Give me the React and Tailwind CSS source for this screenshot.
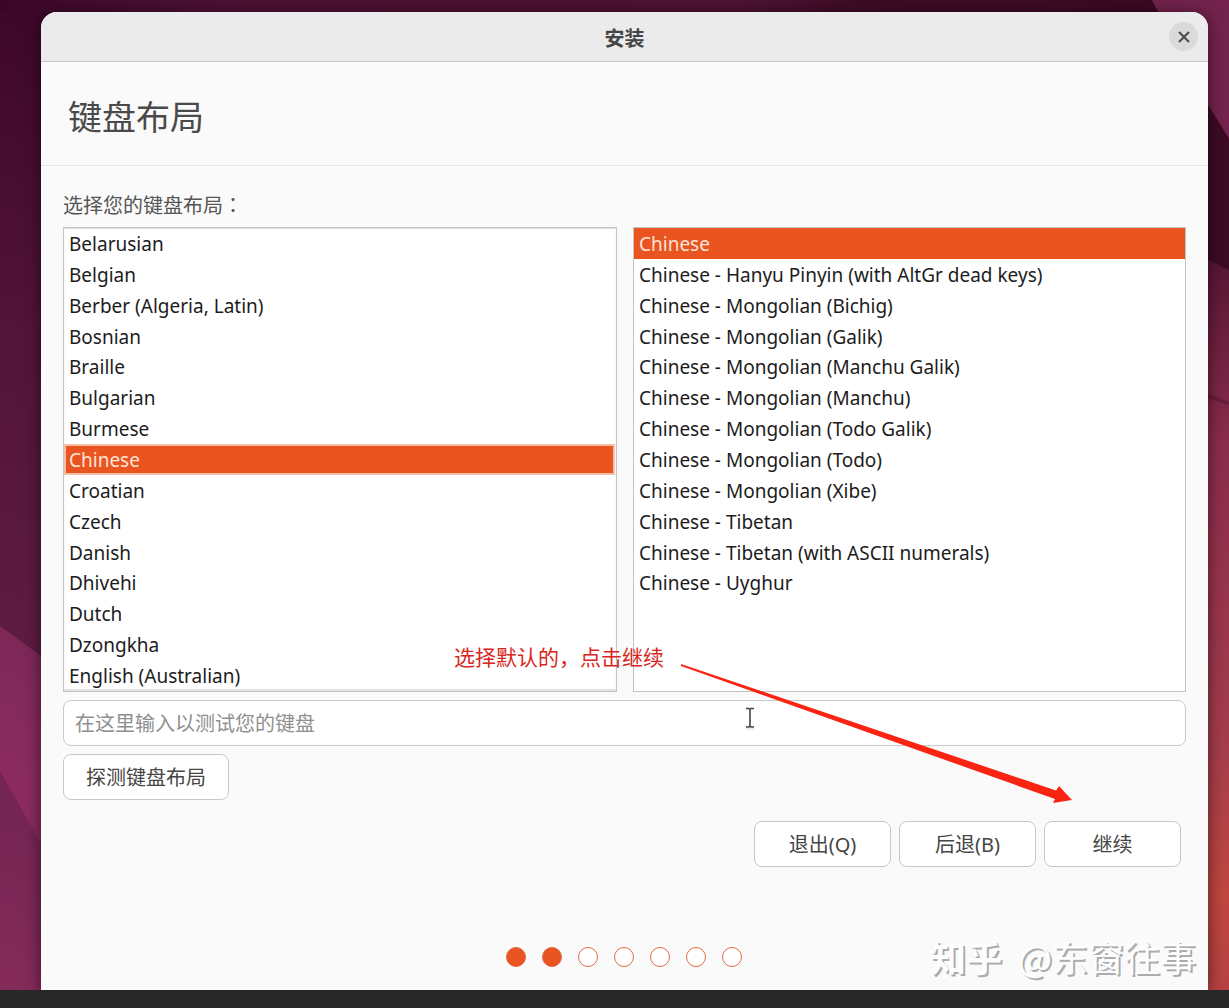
import React, { useState } from "react";

const layouts = [
  "Belarusian",
  "Belgian",
  "Berber (Algeria, Latin)",
  "Bosnian",
  "Braille",
  "Bulgarian",
  "Burmese",
  "Chinese",
  "Croatian",
  "Czech",
  "Danish",
  "Dhivehi",
  "Dutch",
  "Dzongkha",
  "English (Australian)",
];

const variants = [
  "Chinese",
  "Chinese - Hanyu Pinyin (with AltGr dead keys)",
  "Chinese - Mongolian (Bichig)",
  "Chinese - Mongolian (Galik)",
  "Chinese - Mongolian (Manchu Galik)",
  "Chinese - Mongolian (Manchu)",
  "Chinese - Mongolian (Todo Galik)",
  "Chinese - Mongolian (Todo)",
  "Chinese - Mongolian (Xibe)",
  "Chinese - Tibetan",
  "Chinese - Tibetan (with ASCII numerals)",
  "Chinese - Uyghur",
];

function Wallpaper() {
  return (
    <svg
      className="absolute inset-0 h-full w-full"
      viewBox="0 0 1229 1008"
      preserveAspectRatio="none"
      aria-hidden="true"
    >
      <defs>
        <linearGradient id="top" x1="0" y1="0" x2="1" y2="0">
          <stop offset="0" stopColor="#3a0628" />
          <stop offset="0.15" stopColor="#4b1033" />
          <stop offset="0.6" stopColor="#4e1333" />
          <stop offset="0.7" stopColor="#3f0b26" />
          <stop offset="1" stopColor="#3a0a20" />
        </linearGradient>
        <linearGradient id="left" x1="0" y1="0" x2="0" y2="1">
          <stop offset="0" stopColor="#3d0729" />
          <stop offset="0.45" stopColor="#521438" />
          <stop offset="1" stopColor="#611d43" />
        </linearGradient>
        <linearGradient id="facet" x1="0" y1="0" x2="0" y2="1">
          <stop offset="0" stopColor="#7c2857" />
          <stop offset="0.4" stopColor="#8b2b60" />
          <stop offset="1" stopColor="#8b2b60" />
        </linearGradient>
        <linearGradient id="base" x1="0" y1="0" x2="0" y2="1">
          <stop offset="0" stopColor="#722451" />
          <stop offset="1" stopColor="#862b5a" />
        </linearGradient>
        <linearGradient id="right" x1="0" y1="0" x2="0" y2="1">
          <stop offset="0" stopColor="#561633" />
          <stop offset="0.25" stopColor="#8b2c4d" />
          <stop offset="0.65" stopColor="#a53d4c" />
          <stop offset="0.85" stopColor="#c0463f" />
          <stop offset="1" stopColor="#b54142" />
        </linearGradient>
      </defs>
      <rect width="1229" height="1008" fill="url(#top)" />
      <rect y="12" width="60" height="700" fill="url(#left)" />
      <path d="M0 626 L60 670 V1008 H0Z" fill="url(#facet)" />
      <path d="M0 771 L60 877 V1008 H0Z" fill="url(#base)" />
      <path d="M1152 0 H1229 V139 L1200 92Z" fill="#73234d" />
      <path d="M1200 92 L1229 139 V272 L1200 256Z" fill="#3d0b22" />
      <path d="M1200 256 L1229 270 V1008 H1200Z" fill="url(#right)" />
      <path d="M1200 390 L1229 402 V405 L1200 396Z" fill="#691c3c" />
    </svg>
  );
}

function ListBox({ label, items, value, onChange, inset }) {
  return (
    <div
      role="listbox"
      aria-label={label}
      className={
        "grid h-[465px] min-w-0 flex-1 grid-rows-[repeat(15,minmax(0,1fr))] border border-[#c4c4c4] bg-white " +
        (inset ? "pr-px shadow-[inset_0_1px_1px_#dedede,inset_0_-2px_1px_#e2e2e2]" : "")
      }
    >
      {items.map((item) => {
        const active = item === value;
        return (
          <button
            key={item}
            type="button"
            role="option"
            aria-selected={active}
            onClick={() => onChange(item)}
            className={
              "flex min-w-0 items-center whitespace-nowrap text-left text-[19px] leading-6 " +
              (active
                ? inset
                  ? "border-2 border-[#f6bfa6] bg-[#e95420] pt-px pr-1 pl-[3px] text-[#ffe3d6]"
                  : "bg-[#e95420] px-[5px] pt-px text-[#ffe3d6]"
                : "px-[5px] pt-px text-[#1c1c1c]")
            }
          >
            {item}
          </button>
        );
      })}
    </div>
  );
}

function PushButton({ children, className }) {
  return (
    <button
      type="button"
      className={
        "flex h-[46px] items-center justify-center rounded-lg border border-[#c8c8c8] bg-white pt-0.5 text-xl leading-6 text-[#454545] " +
        className
      }
    >
      {children}
    </button>
  );
}

export default function App() {
  const [layout, setLayout] = useState("Chinese");
  const [variant, setVariant] = useState("Chinese");

  return (
    <div className="relative flex min-h-screen flex-col font-['Noto_Sans','Noto_Sans_CJK_SC',sans-serif]">
      <Wallpaper />
      <main className="relative mt-3 mr-[21px] ml-[41px] flex flex-1 flex-col rounded-t-2xl bg-[#fafafa] shadow-[0_2px_16px_rgba(0,0,0,0.55)]">
        <header className="grid h-[50px] shrink-0 grid-cols-[1fr_auto_1fr] items-center rounded-t-2xl border-b border-[#c6c6c6] bg-[#ebebeb] px-2.5">
          <h2 className="col-start-2 pt-1 text-xl leading-6 font-bold text-[#454545]">安装</h2>
          <button
            type="button"
            aria-label="关闭"
            className="flex size-[29px] items-center justify-center justify-self-end rounded-full bg-[#dadada]"
          >
            <svg viewBox="0 0 12 12" className="size-3" fill="none" stroke="#4a4a4a" strokeWidth="2">
              <path d="M1 1 L11 11 M11 1 L1 11" />
            </svg>
          </button>
        </header>

        <div className="flex h-[104px] shrink-0 items-center border-b border-[#e4e4e4] px-[27px] pt-1.5">
          <h1 className="text-[34px] leading-[48px] text-[#4a4a4a]">键盘布局</h1>
        </div>

        <section className="flex flex-col px-[22px] pt-7">
          <p className="mb-[9px] text-xl leading-6 text-[#555]">
            选择您的键盘布局
            <span className="font-['Noto_Sans_CJK_TC',sans-serif] leading-none">：</span>
          </p>
          <div className="flex gap-4">
            <ListBox label="键盘布局" items={layouts} value={layout} onChange={setLayout} inset />
            <ListBox label="键盘布局变体" items={variants} value={variant} onChange={setVariant} />
          </div>
          <input
            type="text"
            aria-label="在这里输入以测试您的键盘"
            placeholder="在这里输入以测试您的键盘"
            className="mt-2 h-[46px] rounded-lg border border-[#cacaca] bg-white px-[11px] text-xl leading-6 placeholder:text-[#8f8f8f]"
          />
          <PushButton className="mt-2 w-[166px]">探测键盘布局</PushButton>
        </section>

        <div className="mt-[21px] flex justify-end gap-2 pr-[27px]">
          <PushButton className="w-[137px]">退出(Q)</PushButton>
          <PushButton className="w-[137px]">后退(B)</PushButton>
          <PushButton className="w-[137px]">继续</PushButton>
        </div>

        <div className="mt-20 mb-[22px] flex justify-center gap-4 pr-0.5">
          {[true, true, false, false, false, false, false].map((done, i) => (
            <span
              key={i}
              className={
                "size-5 rounded-full border border-[#df6a42] " + (done ? "bg-[#e95420]" : "bg-white")
              }
            />
          ))}
        </div>

        <p className="absolute top-[630px] left-[413px] font-['Noto_Sans_CJK_SC',sans-serif] text-[21px] leading-7 whitespace-nowrap text-[#d9261c]">
          选择默认的，点击继续
        </p>
        <svg
          className="pointer-events-none absolute top-[640px] left-[630px]"
          width="410"
          height="160"
          viewBox="671 652 410 160"
          aria-hidden="true"
        >
          <path d="M681 664 L1056 790.5 L1059 786 L1072 800 L1053 803 L1055 799 L681 666Z" fill="#fa2413" />
          <path
            d="M746 708.5 H749 L750 709.5 L751 708.5 H754 M750 709 V726 M746 727 H749 L750 726 L751 727 H754"
            fill="none"
            stroke="#444"
            strokeWidth="1.6"
          />
          <path d="M745 729 H755" stroke="#ddd" />
        </svg>
        <p className="absolute right-3 bottom-2 flex gap-4 font-['Noto_Sans_CJK_SC',sans-serif] text-4xl leading-[52px] whitespace-nowrap text-[#fdfdfd] [text-shadow:2px_2px_0_#acacac]">
          <span className="font-bold">知乎</span>
          <span>@东窗往事</span>
        </p>
      </main>
      <footer className="relative h-[18px] shrink-0 bg-[#272727]" />
    </div>
  );
}
